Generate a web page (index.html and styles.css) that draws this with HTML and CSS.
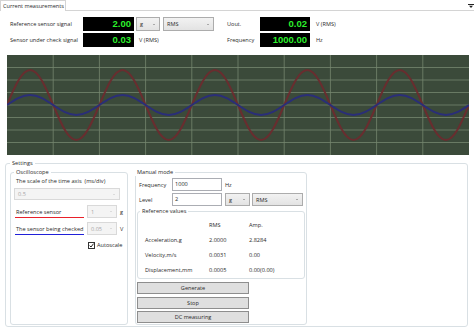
FILE: index.html
```html
<!DOCTYPE html>
<html lang="en">
<head>
    <meta charset="UTF-8">
    <title>Current measurements</title>
    <link rel="stylesheet" href="styles.css">
</head>
<body>
    <div class="tabbar">
        <div class="tab">Current measurements</div>
        <div class="tab-fill">
            <svg class="pin" width="6" height="4" viewBox="0 0 6 4">
                <rect x="0" y="0" width="6" height="1" fill="#222"/>
                <polygon points="1,1.8 5,1.8 3,4" fill="#222"/>
            </svg>
        </div>
    </div>

    <div class="readings">
        <span class="lbl">Reference sensor signal</span>
        <span class="lcd">2.00</span>
        <span class="pair">
            <span class="combo w-g"><span>g</span><i class="arrow"></i></span>
            <span class="combo w-rms"><span>RMS</span><i class="arrow"></i></span>
        </span>
        <span class="lbl ind">Uout.</span>
        <span class="lcd">0.02</span>
        <span class="unit">V (RMS)</span>

        <span class="lbl">Sensor under check signal</span>
        <span class="lcd">0.03</span>
        <span class="unit-near">V (RMS)</span>
        <span class="lbl ind">Frequency</span>
        <span class="lcd">1000.00</span>
        <span class="unit">Hz</span>
    </div>

    <svg class="scope" width="462" height="100" viewBox="0 0 462 100">
        <defs>
            <path id="redWave" d="M0,50 C7.53,32.07 14.74,15 23.1,15 S38.67,32.07 46.2,50 S60.94,85 69.3,85 S84.87,67.93 92.4,50"/>
            <path id="blueWave" d="M0,50 C7.53,44.88 14.74,40 23.1,40 S38.67,44.88 46.2,50 S60.94,60 69.3,60 S84.87,55.12 92.4,50"/>
        </defs>
        <g class="grid">
            <line x1="46.2" y1="0" x2="46.2" y2="100"/>
            <line x1="92.4" y1="0" x2="92.4" y2="100"/>
            <line x1="138.6" y1="0" x2="138.6" y2="100"/>
            <line x1="184.8" y1="0" x2="184.8" y2="100"/>
            <line x1="231" y1="0" x2="231" y2="100"/>
            <line x1="277.2" y1="0" x2="277.2" y2="100"/>
            <line x1="323.4" y1="0" x2="323.4" y2="100"/>
            <line x1="369.6" y1="0" x2="369.6" y2="100"/>
            <line x1="415.8" y1="0" x2="415.8" y2="100"/>
            <line x1="0" y1="12.5" x2="462" y2="12.5"/>
            <line x1="0" y1="25" x2="462" y2="25"/>
            <line x1="0" y1="37.5" x2="462" y2="37.5"/>
            <line x1="0" y1="50" x2="462" y2="50"/>
            <line x1="0" y1="62.5" x2="462" y2="62.5"/>
            <line x1="0" y1="75" x2="462" y2="75"/>
            <line x1="0" y1="87.5" x2="462" y2="87.5"/>
        </g>
        <g class="wave-red">
            <use href="#redWave"/>
            <use href="#redWave" x="92.4"/>
            <use href="#redWave" x="184.8"/>
            <use href="#redWave" x="277.2"/>
            <use href="#redWave" x="369.6"/>
        </g>
        <g class="wave-blue">
            <use href="#blueWave"/>
            <use href="#blueWave" x="92.4"/>
            <use href="#blueWave" x="184.8"/>
            <use href="#blueWave" x="277.2"/>
            <use href="#blueWave" x="369.6"/>
        </g>
    </svg>

    <fieldset class="group settings">
        <legend>Settings</legend>
        <div class="cols">
            <fieldset class="group osc">
                <legend>Oscilloscope</legend>
                <div class="caption">The scale of the time axis&nbsp; (ms/div)</div>
                <span class="combo off w-scale"><span>0.5</span><i class="arrow"></i></span>

                <div class="trace-row first">
                    <span class="trace red">Reference sensor</span>
                    <span class="combo off w-small"><span>1</span><i class="arrow"></i></span>
                    <span class="unit-s">g</span>
                </div>
                <div class="trace-row">
                    <span class="trace blue">The sensor being checked</span>
                    <span class="combo off w-small"><span>0.05</span><i class="arrow"></i></span>
                    <span class="unit-s">V</span>
                </div>
                <div class="check-row">
                    <svg class="check" width="7" height="7" viewBox="0 0 7 7">
                        <rect x="0.5" y="0.5" width="6" height="6" fill="#fff" stroke="#333"/>
                        <path d="M1.6,3.6 L3,5 L5.6,1.6" fill="none" stroke="#222" stroke-width="1"/>
                    </svg>
                    <span>Autoscale</span>
                </div>
            </fieldset>

            <fieldset class="group manual">
                <legend>Manual mode</legend>
                <div class="field-row first">
                    <span class="field-lbl">Frequency</span>
                    <span class="input">1000</span>
                    <span class="unit-s">Hz</span>
                </div>
                <div class="field-row">
                    <span class="field-lbl">Level</span>
                    <span class="input">2</span>
                    <span class="combo w-g2"><span>g</span><i class="arrow"></i></span>
                    <span class="combo w-rms2"><span>RMS</span><i class="arrow"></i></span>
                </div>

                <fieldset class="group ref">
                    <legend>Reference values</legend>
                    <div class="ref-table">
                        <span></span><span>RMS</span><span>Amp.</span>
                        <span>Acceleration,g</span><span>2.0000</span><span>2.8284</span>
                        <span>Velocity,m/s</span><span>0.0031</span><span>0.00</span>
                        <span>Displacement,mm</span><span>0.0005</span><span>0.00(0.00)</span>
                    </div>
                </fieldset>

                <div class="buttons">
                    <button class="btn">Generate</button>
                    <button class="btn">Stop</button>
                    <button class="btn">DC measuring</button>
                </div>
            </fieldset>
        </div>
    </fieldset>
</body>
</html>
```

FILE: styles.css
```css
* {
    box-sizing: border-box;
}
body {
    margin: 0;
    width: 474px;
    height: 330px;
    overflow: hidden;
    background-color: #ffffff;
    font-family: "Open Sans", "Noto Sans", sans-serif;
    font-size: 5.6px;
    color: #2a2a2a;
}
.tabbar {
    display: flex;
    height: 11px;
}
.tab {
    width: 66px;
    border: 1px solid #d4d4d4;
    border-bottom: none;
    padding-left: 2px;
    line-height: 10px;
}
.tab-fill {
    flex: 1;
    border-bottom: 1px solid #d4d4d4;
    display: flex;
    justify-content: flex-end;
    align-items: flex-start;
    padding-top: 4px;
}
.pin {
    display: block;
}
.readings {
    display: grid;
    grid-template-columns: 73px 51px 80px 46px 50px auto;
    grid-auto-rows: 14px;
    row-gap: 2px;
    padding: 6px 0 0 10px;
    align-items: center;
}
.ind {
    padding-left: 13px;
}
.lcd {
    height: 14px;
    background-color: #000000;
    color: #2cf02c;
    font-family: "Liberation Sans", Arial, sans-serif;
    font-weight: bold;
    font-size: 9.5px;
    line-height: 14px;
    text-align: right;
    padding-right: 3px;
}
.pair {
    display: flex;
    gap: 3px;
    padding-left: 2px;
}
.unit {
    padding-left: 6px;
}
.unit-near {
    padding-left: 5px;
}
.combo {
    display: flex;
    justify-content: space-between;
    align-items: center;
    height: 14px;
    padding: 0 4px 0 3px;
    background: linear-gradient(#f2f2f2, #e3e3e3);
    border: 1px solid #acacac;
    color: #2a2a2a;
}
.arrow {
    width: 0;
    height: 0;
    border-left: 1.5px solid transparent;
    border-right: 1.5px solid transparent;
    border-top: 1.5px solid #6a6a6a;
}
.combo.off {
    background: #f4f4f4;
    border-color: #d9d9d9;
    color: #a8a8a8;
}
.combo.off .arrow {
    border-top-color: #c4c4c4;
}
.w-g {
    width: 24px;
}
.w-rms {
    width: 51px;
}
.scope {
    display: block;
    margin: 8px 0 0 7px;
    background-color: #3b4a3a;
}
.grid line {
    stroke: #75876f;
    stroke-width: 0.8;
}
.wave-red {
    fill: none;
    stroke: #6e2a2e;
    stroke-width: 2;
    opacity: 0.9;
}
.wave-blue {
    fill: none;
    stroke: #2a2e78;
    stroke-width: 2;
}
.group {
    margin: 0;
    min-width: 0;
    border: 1px solid #d9e0e4;
    border-radius: 3px;
}
.group legend {
    padding: 0 2px;
    line-height: 8px;
}
.settings {
    margin: 4px 0 0 5px;
    width: 463px;
    height: 168px;
    padding: 1px 4px 0 4px;
}
.cols {
    display: flex;
    gap: 7px;
}
.osc {
    width: 118px;
    height: 157px;
    padding: 0 3px;
}
.caption {
    margin-top: 1px;
    padding-left: 2px;
    line-height: 8px;
}
.w-scale {
    width: 106px;
    height: 12px;
    margin-top: 3px;
}
.trace-row {
    display: flex;
    align-items: center;
    height: 13px;
    margin-top: 4px;
}
.trace-row.first {
    margin-top: 5px;
}
.trace {
    width: 69px;
    height: 13px;
    margin-left: 1px;
    padding: 2px 0 0 1px;
    line-height: 10px;
}
.trace.red {
    border-bottom: 1.5px solid #e8202a;
}
.trace.blue {
    border-bottom: 1.5px solid #2020d8;
}
.w-small {
    width: 30px;
    height: 13px;
    margin-left: 3px;
}
.unit-s {
    margin-left: 3px;
}
.check-row {
    display: flex;
    align-items: center;
    margin-top: 6px;
    padding-left: 74px;
    gap: 2px;
}
.check {
    display: block;
}
.manual {
    width: 172px;
    height: 157px;
    padding: 0 3px;
}
.manual legend {
    margin-left: -4px;
}
.field-row {
    display: flex;
    align-items: center;
    height: 13px;
    margin-top: 2px;
}
.field-lbl {
    width: 33px;
}
.input {
    width: 50px;
    height: 13px;
    border: 1px solid #abadb3;
    background-color: #ffffff;
    padding-left: 2px;
    line-height: 11px;
}
.w-g2 {
    width: 25px;
    height: 13px;
    margin-left: 3px;
}
.w-rms2 {
    width: 51px;
    height: 13px;
    margin-left: 2px;
}
.ref {
    width: 168px;
    height: 72px;
    margin: 1px 0 0 -2px;
    padding: 2px 0 0 7px;
}
.ref legend {
    margin-left: -5px;
}
.ref-table {
    display: grid;
    grid-template-columns: 64px 40px auto;
    grid-auto-rows: 15px;
    align-items: center;
}
.buttons {
    display: flex;
    flex-direction: column;
    gap: 2.5px;
    margin: 3px 0 0 -2px;
}
.btn {
    width: 112px;
    height: 12px;
    padding: 0;
    background-color: #dfdfdf;
    border: 1px solid #8e8e8e;
    font-family: inherit;
    font-size: 5.6px;
    color: #2a2a2a;
    line-height: 10px;
}
```
